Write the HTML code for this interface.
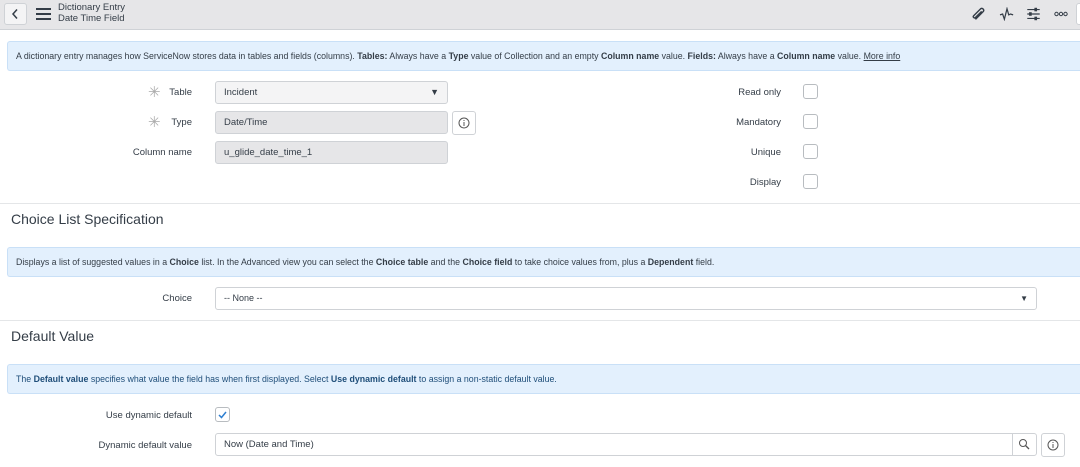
<!DOCTYPE html>
<html><head><meta charset="utf-8"><style>
*{box-sizing:border-box;margin:0;padding:0}
body{width:1080px;height:467px;overflow:hidden;background:#fff;font-family:"Liberation Sans",sans-serif;color:#343d47;position:relative;font-size:9.5px}
.a{position:absolute}
.hdr{left:0;top:0;width:1080px;height:30px;background:#e6e6e8;border-bottom:1px solid #cfd2d6}
.info{left:7px;width:1080px;height:30px;background:#e3f0fd;border:1px solid #c9e0f7;border-right:none;border-radius:3px 0 0 3px;padding-left:8px;line-height:28px;font-size:8.8px;color:#343d47;white-space:nowrap}
.lbl{width:120px;text-align:right;font-size:9.5px;color:#343d47}
.inp{height:23px;border:1px solid #cfd2d6;border-radius:3px;padding-left:8px;line-height:21px;font-size:9.5px;color:#343d47}
.ro{background:#e6e6e8}
.cb{width:15px;height:15px;border:1px solid #b8bcc0;border-radius:3px;background:#fff}
.div{left:0;width:1080px;height:1px;background:#e4e6e8}
.h2{font-size:14px;color:#343d47;left:11px}
.btn{width:24px;height:24px;border:1px solid #cfd2d6;border-radius:3px;background:#fff}
b{font-weight:bold}
</style></head><body>
<div class="a hdr"></div>
<div class="a" style="left:4px;top:3px;width:23px;height:22px;background:#f4f4f5;border:1px solid #cfd2d6;border-radius:3px"></div>
<svg class="a" style="left:9px;top:8px" width="12" height="12"><path d="M8 1.5 L4 6 L8 10.5" stroke="#343d47" stroke-width="1.5" fill="none"/></svg>
<svg class="a" style="left:36px;top:7px" width="15" height="14"><path d="M0 2h15M0 7h15M0 12h15" stroke="#343d47" stroke-width="2"/></svg>
<div class="a" style="left:58px;top:2px;font-size:9.5px;line-height:11px;color:#343d47">Dictionary Entry<br>Date Time Field</div>
<svg class="a" style="left:971px;top:6px" width="16" height="16" viewBox="0 0 18 18"><path d="M5 15 L14 6 a2.2 2.2 0 0 0 -3 -3 L3 11 a1.3 1.3 0 0 0 2 2 L12 6" stroke="#343d47" stroke-width="1.6" fill="none"/></svg>
<svg class="a" style="left:999px;top:7px" width="16" height="14" viewBox="0 0 18 16"><path d="M1 9 L4 8 L6 14 L9 2 L11 9 L13 8 L16 9" stroke="#343d47" stroke-width="1.4" fill="none"/></svg>
<svg class="a" style="left:1026px;top:6px" width="15" height="16" viewBox="0 0 16 18"><path d="M1 4h14M1 9h14M1 14h14" stroke="#343d47" stroke-width="1.3"/><rect x="9" y="2" width="3" height="4" fill="#343d47"/><rect x="3" y="7" width="3" height="4" fill="#343d47"/><rect x="9" y="12" width="3" height="4" fill="#343d47"/></svg>
<svg class="a" style="left:1054px;top:11px" width="14" height="6"><circle cx="2.5" cy="3" r="1.7" stroke="#343d47" fill="none"/><circle cx="7" cy="3" r="1.7" stroke="#343d47" fill="none"/><circle cx="11.5" cy="3" r="1.7" stroke="#343d47" fill="none"/></svg>
<div class="a" style="left:1076px;top:3px;width:10px;height:22px;background:#fff;border:1px solid #cfd2d6;border-radius:3px"></div>

<div class="a info" style="top:41px">A dictionary entry manages how ServiceNow stores data in tables and fields (columns). <b>Tables:</b> Always have a <b>Type</b> value of Collection and an empty <b>Column name</b> value. <b>Fields:</b> Always have a <b>Column name</b> value. <u>More info</u></div>

<div class="a" style="left:148px;top:85px;color:#aaa;font-size:15px;line-height:15px">✳</div>
<div class="a lbl" style="left:72px;top:87px">Table</div>
<div class="a inp" style="left:215px;top:81px;width:233px;background:#f4f4f5">Incident<span style="position:absolute;right:8px;font-size:9px">▼</span></div>
<div class="a" style="left:148px;top:115px;color:#aaa;font-size:15px;line-height:15px">✳</div>
<div class="a lbl" style="left:72px;top:117px">Type</div>
<div class="a inp ro" style="left:215px;top:111px;width:233px">Date/Time</div>
<div class="a btn" style="left:452px;top:111px"></div>
<svg class="a" style="left:458px;top:117px" width="12" height="12"><circle cx="6" cy="6" r="5" stroke="#555" fill="none"/><path d="M6 5v4M6 3v1" stroke="#555"/></svg>
<div class="a lbl" style="left:72px;top:147px">Column name</div>
<div class="a inp ro" style="left:215px;top:141px;width:233px">u_glide_date_time_1</div>

<div class="a lbl" style="left:661px;top:87px">Read only</div>
<div class="a cb" style="left:803px;top:84px"></div>
<div class="a lbl" style="left:661px;top:117px">Mandatory</div>
<div class="a cb" style="left:803px;top:114px"></div>
<div class="a lbl" style="left:661px;top:147px">Unique</div>
<div class="a cb" style="left:803px;top:144px"></div>
<div class="a lbl" style="left:661px;top:177px">Display</div>
<div class="a cb" style="left:803px;top:174px"></div>

<div class="a div" style="top:203px"></div>
<div class="a h2" style="top:211px">Choice List Specification</div>
<div class="a info" style="top:247px">Displays a list of suggested values in a <b>Choice</b> list. In the Advanced view you can select the <b>Choice table</b> and the <b>Choice field</b> to take choice values from, plus a <b>Dependent</b> field.</div>
<div class="a lbl" style="left:72px;top:293px">Choice</div>
<div class="a inp" style="left:215px;top:287px;width:822px;font-size:9px">-- None --<span style="position:absolute;right:8px;font-size:8px">▼</span></div>

<div class="a div" style="top:320px"></div>
<div class="a h2" style="top:328px">Default Value</div>
<div class="a info" style="top:364px;color:#1f4e79">The <b>Default value</b> specifies what value the field has when first displayed. Select <b>Use dynamic default</b> to assign a non-static default value.</div>
<div class="a lbl" style="left:72px;top:410px">Use dynamic default</div>
<div class="a cb" style="left:215px;top:407px"></div>
<svg class="a" style="left:217px;top:409px" width="11" height="11"><path d="M2 6 L4.5 8.5 L9 3" stroke="#2e7fd1" stroke-width="1.5" fill="none"/></svg>
<div class="a lbl" style="left:72px;top:440px">Dynamic default value</div>
<div class="a inp" style="left:215px;top:433px;width:822px">Now (Date and Time)</div>
<div class="a" style="left:1012px;top:434px;width:1px;height:21px;background:#cfd2d6"></div>
<svg class="a" style="left:1018px;top:438px" width="12" height="12"><circle cx="5" cy="5" r="3.5" stroke="#555" fill="none"/><path d="M7.5 7.5 L11 11" stroke="#555" stroke-width="1.3"/></svg>
<div class="a btn" style="left:1041px;top:433px"></div>
<svg class="a" style="left:1047px;top:439px" width="12" height="12"><circle cx="6" cy="6" r="5" stroke="#555" fill="none"/><path d="M6 5v4M6 3v1" stroke="#555"/></svg>
</body></html>
